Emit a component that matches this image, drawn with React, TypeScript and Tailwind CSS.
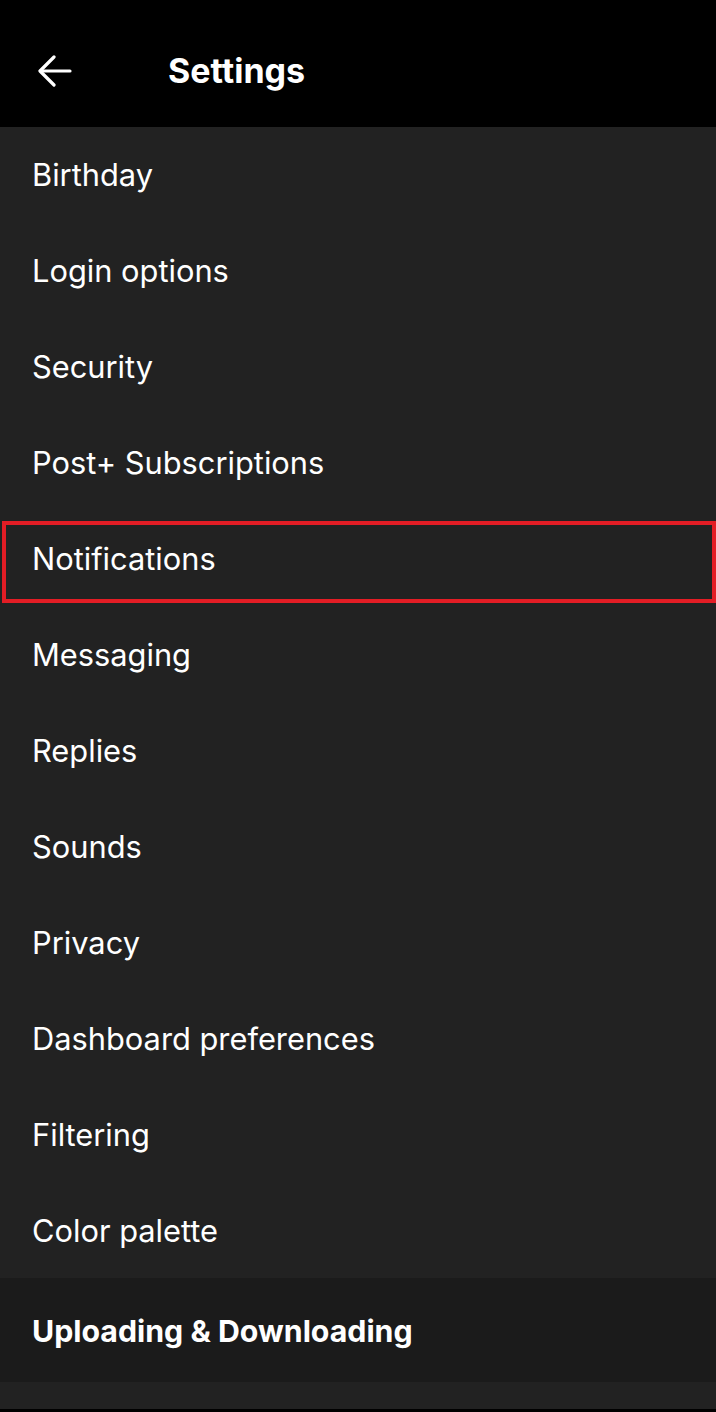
import React from "react";

const items = [
  "Birthday",
  "Login options",
  "Security",
  "Post+ Subscriptions",
  "Notifications",
  "Messaging",
  "Replies",
  "Sounds",
  "Privacy",
  "Dashboard preferences",
  "Filtering",
  "Color palette",
];

function BackArrow() {
  return (
    <svg width="34" height="32" viewBox="0 0 34 32" fill="none" stroke="white" strokeWidth="3.2" strokeLinecap="round" strokeLinejoin="round">
      <path d="M32 16H3" />
      <path d="M16 2L2 16l14 14" />
    </svg>
  );
}

export default function App() {
  return (
    <div className="w-[716px] h-[1412px] overflow-hidden bg-[#222222] text-white" style={{ fontFamily: "Inter, 'Noto Sans', sans-serif" }}>
      <header className="h-[127px] bg-black flex items-center pt-[14px]">
        <div className="w-[168px] pl-[38px] flex items-center">
          <BackArrow />
        </div>
        <h1 className="text-[34px] font-bold leading-none">Settings</h1>
      </header>
      <ul>
        {items.map((label) => (
          <li
            key={label}
            className={
              label === "Notifications"
                ? "h-[96px] flex items-center pl-[32px] text-[30.8px] leading-none relative"
                : "h-[96px] flex items-center pl-[32px] text-[30.8px] leading-none"
            }
          >
            <span className="mt-[1px]">{label}</span>
            {label === "Notifications" && (
              <div className="absolute left-[2px] right-0 top-[10px] bottom-[4px] border-[4px] border-[#e31d25] pointer-events-none" />
            )}
          </li>
        ))}
      </ul>
      <div className="h-[104px] bg-[#1b1b1b] flex items-center pl-[32px] mt-[-1px]">
        <span className="text-[30.3px] font-bold leading-none mt-[2px]">Uploading &amp; Downloading</span>
      </div>
      <div className="h-[27px] bg-[#222222]" />
      <div className="h-[4px] bg-black" />
    </div>
  );
}
